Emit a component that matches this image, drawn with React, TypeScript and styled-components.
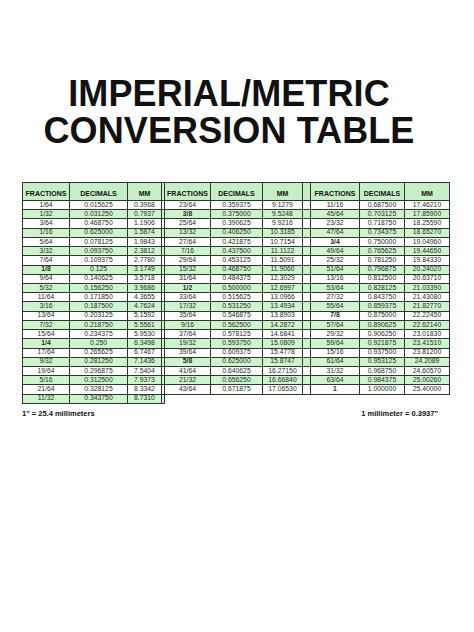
import React from "react";
import styled, { createGlobalStyle } from "styled-components";

type Entry = [string, string, string, boolean?];

const GlobalStyle = createGlobalStyle`
	body {
		margin: 0;
		background: #ffffff;
		font-family: "Liberation Sans", Arial, sans-serif;
		color: #111;
	}
`;

const group1: Entry[] = [
	["1/64", "0.015625", "0.3968"],
	["1/32", "0.031250", "0.7937"],
	["3/64", "0.468750", "1.1906"],
	["1/16", "0.625000", "1.5874"],
	["5/64", "0.078125", "1.9843"],
	["3/32", "0.093750", "2.3812"],
	["7/64", "0.109375", "2.7780"],
	["1/8", "0.125", "3.1749", true],
	["9/64", "0.140625", "3.5718"],
	["5/32", "0.156250", "3.9686"],
	["11/64", "0.171850", "4.3655"],
	["3/16", "0.187500", "4.7624"],
	["13/64", "0.203125", "5.1592"],
	["7/32", "0.218750", "5.5561"],
	["15/64", "0.234375", "5.9530"],
	["1/4", "0.250", "6.3498", true],
	["17/64", "0.265625", "6.7467"],
	["9/32", "0.281250", "7.1436"],
	["19/64", "0.296875", "7.5404"],
	["5/16", "0.312500", "7.9373"],
	["21/64", "0.328125", "8.3342"],
	["11/32", "0.343750", "8.7310"],
];

const group2: Entry[] = [
	["23/64", "0.359375", "9.1279"],
	["3/8", "0.375000", "9.5248", true],
	["25/64", "0.390625", "9.9216"],
	["13/32", "0.406250", "10.3185"],
	["27/64", "0.421875", "10.7154"],
	["7/16", "0.437500", "11.1122"],
	["29/64", "0.453125", "11.5091"],
	["15/32", "0.468750", "11.9060"],
	["31/64", "0.484375", "12.3029"],
	["1/2", "0.500000", "12.6997", true],
	["33/64", "0.515625", "13.0966"],
	["17/32", "0.531250", "13.4934"],
	["35/64", "0.546875", "13.8903"],
	["9/16", "0.562500", "14.2872"],
	["37/64", "0.578125", "14.6841"],
	["19/32", "0.593750", "15.0809"],
	["39/64", "0.609375", "15.4778"],
	["5/8", "0.625000", "15.8747", true],
	["41/64", "0.640625", "16.27150"],
	["21/32", "0.656250", "16.66840"],
	["43/64", "0.671875", "17.06530"],
];

const group3: Entry[] = [
	["11/16", "0.687500", "17.46210"],
	["45/64", "0.703125", "17.85900"],
	["23/32", "0.718750", "18.25590"],
	["47/64", "0.734375", "18.65270"],
	["3/4", "0.750000", "19.04960", true],
	["49/64", "0.765625", "19.44650"],
	["25/32", "0.781250", "19.84330"],
	["51/64", "0.796875", "20.24020"],
	["13/16", "0.812500", "20.63710"],
	["53/64", "0.828125", "21.03390"],
	["27/32", "0.843750", "21.43080"],
	["55/64", "0.859375", "21.82770"],
	["7/8", "0.875000", "22.22450", true],
	["57/64", "0.890625", "22.62140"],
	["29/32", "0.906250", "23.01830"],
	["59/64", "0.921875", "23.41510"],
	["15/16", "0.937500", "23.81200"],
	["61/64", "0.953125", "24.2089"],
	["31/32", "0.968750", "24.60570"],
	["63/64", "0.984375", "25.00260"],
	["1", "1.000000", "25.40000", true],
];

interface GroupProps {
	widths: number[];
	rows: Entry[];
	edge?: boolean;
}

const DataGroup: React.FC<GroupProps> = ({ widths, rows, edge }) => (
	<Group $edge={edge}>
		<HeaderRow>
			<HeadCell $w={widths[0]}>FRACTIONS</HeadCell>
			<HeadCell $w={widths[1]}>DECIMALS</HeadCell>
			<HeadCell $w={widths[2]}>MM</HeadCell>
		</HeaderRow>
		{rows.map(([frac, dec, mm, bold], i) => (
			<Row key={frac} $stripe={i % 2 === 1}>
				<Cell $w={widths[0]} $bold={bold}>{frac}</Cell>
				<Cell $w={widths[1]}>{dec}</Cell>
				<Cell $w={widths[2]}>{mm}</Cell>
			</Row>
		))}
	</Group>
);

const SpacerGroup: React.FC<{ width: number; count: number }> = ({ width, count }) => (
	<Group>
		<HeaderRow>
			<HeadCell $w={width} />
		</HeaderRow>
		{Array.from({ length: count }, (_, i) => (
			<Row key={i} $stripe={i % 2 === 1}>
				<Cell $w={width} />
			</Row>
		))}
	</Group>
);

const App: React.FC = () => {
	return (
		<>
			<GlobalStyle />
			<Page>
				<Title>
					IMPERIAL/METRIC
					<br />
					CONVERSION TABLE
				</Title>
				<Table>
					<DataGroup edge widths={[47, 58, 34]} rows={group1} />
					<SpacerGroup width={3} count={22} />
					<DataGroup widths={[46, 52, 40]} rows={group2} />
					<SpacerGroup width={8} count={21} />
					<DataGroup widths={[49, 45, 45]} rows={group3} />
				</Table>
				<Footer>
					<Note>1" = 25.4 millimeters</Note>
					<Note>1 millimeter = 0.3937"</Note>
				</Footer>
			</Page>
		</>
	);
};

export default App;

const Page = styled.div`
	width: 474px;
	min-height: 632px;
	padding-top: 75px;
	box-sizing: border-box;
`;

const Title = styled.h1`
	margin: 0;
	padding-right: 16px;
	font-size: 36px;
	line-height: 37px;
	font-weight: 700;
	text-align: center;
	color: #111;
	letter-spacing: 0.1px;
`;

const Table = styled.div`
	display: flex;
	align-items: flex-start;
	margin: 33px 0 0 22px;
`;

const Group = styled.div<{ $edge?: boolean }>`
	display: flex;
	flex-direction: column;
	border-top: 1px solid #333;
	border-left: ${(p) => (p.$edge ? "1px solid #333" : "none")};
`;

const HeaderRow = styled.div`
	display: flex;
	height: 18px;
	background: #c6efc6;
`;

const Row = styled.div<{ $stripe: boolean }>`
	display: flex;
	height: 9.23px;
	background: ${(p) => (p.$stripe ? "#ccf5cc" : "#ffffff")};
`;

const Cell = styled.div<{ $w: number; $bold?: boolean }>`
	width: ${(p) => p.$w}px;
	box-sizing: border-box;
	border-right: 1px solid #333;
	border-bottom: 1px solid #333;
	display: flex;
	align-items: center;
	justify-content: center;
	font-size: 6.8px;
	line-height: 1;
	font-weight: ${(p) => (p.$bold ? 700 : 400)};
	color: #2a2a2a;
	overflow: hidden;
	white-space: nowrap;
`;

const HeadCell = styled(Cell)`
	font-size: 7px;
	font-weight: 700;
	color: #111;
	padding-top: 3px;
`;

const Footer = styled.div`
	display: flex;
	justify-content: space-between;
	margin: 5px 36px 0 22px;
`;

const Note = styled.span`
	font-size: 7.5px;
	font-weight: 700;
	color: #111;
`;
